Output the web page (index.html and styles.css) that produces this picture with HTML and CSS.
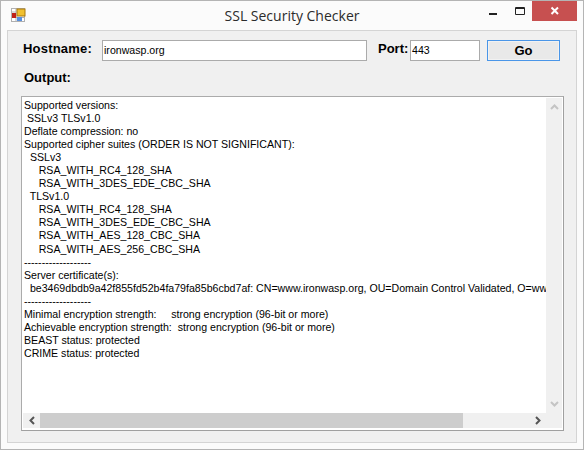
FILE: index.html
```html
<!DOCTYPE html>
<html lang="en">
<head>
    <meta charset="UTF-8">
    <meta name="viewport" content="width=device-width, initial-scale=1.0">
    <title>SSL Security Checker</title>
    <link rel="stylesheet" href="styles.css">
</head>
<body>

    <div class="window">
        <div class="titlebar">
            <svg class="app-icon" width="16" height="16" viewBox="0 0 16 16">
                <rect x="0.5" y="0.5" width="13" height="13" fill="#fff" stroke="#b0b0b0"/>
                <path d="M5 0v14M0 9.5h14M0 4h5" stroke="#b0b0b0" fill="none"/>
                <rect x="1" y="5" width="4" height="5" fill="#c02018"/>
                <rect x="6" y="1" width="8" height="7" fill="#f0c030" stroke="#a87810"/>
                <rect x="6" y="9" width="5" height="4" fill="#5890e0"/>
            </svg>
            <div class="title">SSL Security Checker</div>
            <div class="controls">
                <svg class="ctl" width="27" height="20" viewBox="0 0 27 20"><rect x="11" y="12" width="8" height="2" fill="#222"/></svg>
                <svg class="ctl" width="27" height="20" viewBox="0 0 27 20"><path d="M10.5 6.5h9v7h-9z M10.5 7.5h9" fill="none" stroke="#222"/></svg>
                <div class="close">
                    <svg width="10" height="10" viewBox="0 0 10 10"><path d="M1.5 1.5l6.5 6.5M8 1.5l-6.5 6.5" stroke="#fff" stroke-width="2"/></svg>
                </div>
            </div>
        </div>

        <div class="panel">
            <div class="form-row">
                <label class="label host-label">Hostname:</label>
                <div class="input host-input">ironwasp.org</div>
                <label class="label port-label">Port:</label>
                <div class="input port-input">443</div>
                <button class="go">Go</button>
            </div>
            <div class="label output-label">Output:</div>

            <div class="output">
                <pre class="text">Supported versions:
 SSLv3 TLSv1.0
Deflate compression: no
Supported cipher suites (ORDER IS NOT SIGNIFICANT):
  SSLv3
     RSA_WITH_RC4_128_SHA
     RSA_WITH_3DES_EDE_CBC_SHA
  TLSv1.0
     RSA_WITH_RC4_128_SHA
     RSA_WITH_3DES_EDE_CBC_SHA
     RSA_WITH_AES_128_CBC_SHA
     RSA_WITH_AES_256_CBC_SHA
-------------------
Server certificate(s):
  be3469dbdb9a42f855fd52b4fa79fa85b6cbd7af: CN=www.ironwasp.org, OU=Domain Control Validated, O=www.ironwasp.org
-------------------
Minimal encryption strength:     strong encryption (96-bit or more)
Achievable encryption strength:  strong encryption (96-bit or more)
BEAST status: protected
CRIME status: protected</pre>
                <div class="vscroll">
                    <svg width="9" height="6" viewBox="0 0 9 6"><path d="M1 5l3.5-3.5L8 5" fill="none" stroke="#c4c4c4" stroke-width="2"/></svg>
                    <svg width="9" height="6" viewBox="0 0 9 6"><path d="M1 1l3.5 3.5L8 1" fill="none" stroke="#c4c4c4" stroke-width="2"/></svg>
                </div>
                <div class="hscroll">
                    <svg class="arrow" width="6" height="9" viewBox="0 0 6 9"><path d="M5 1L1.5 4.5 5 8" fill="none" stroke="#555" stroke-width="2"/></svg>
                    <div class="track"><div class="thumb"></div></div>
                    <svg class="arrow" width="6" height="9" viewBox="0 0 6 9"><path d="M1 1l3.5 3.5L1 8" fill="none" stroke="#555" stroke-width="2"/></svg>
                </div>
                <div class="corner"></div>
            </div>
        </div>
    </div>

</body>
</html>
```
FILE: styles.css
```css
html, body {
    margin: 0;
    padding: 0;
    width: 584px;
    height: 450px;
    overflow: hidden;
}

body {
    font-family: 'Liberation Sans', Arial, sans-serif;
    color: #000;
}

.window {
    width: 584px;
    height: 450px;
    box-sizing: border-box;
    background-color: #fbfbfb;
    border: 1px solid #b4b4b4;
    display: flex;
    flex-direction: column;
}

.titlebar {
    height: 29px;
    flex: none;
    display: flex;
    align-items: flex-start;
    position: relative;
}

.app-icon {
    margin: 7px 0 0 10px;
}

.title {
    position: absolute;
    left: 0;
    right: 0;
    top: 5px;
    text-align: center;
    font-family: 'Open Sans', sans-serif;
    font-size: 14px;
    line-height: 20px;
    color: #2b2b2b;
}

.controls {
    margin-left: auto;
    margin-right: 6px;
    display: flex;
}

.ctl {
    display: block;
}

.close {
    width: 45px;
    height: 20px;
    background-color: #c75050;
    display: flex;
    align-items: center;
    justify-content: center;
}

.panel {
    flex: none;
    width: 570px;
    height: 413px;
    margin-left: 6px;
    box-sizing: border-box;
    background-color: #f0f0f0;
    border: 1px solid #d4d4d4;
    padding: 9px 12px 11px 13px;
    display: flex;
    flex-direction: column;
}

.form-row {
    display: flex;
    align-items: center;
    height: 21px;
}

.label {
    font-size: 13px;
    font-weight: bold;
    color: #000;
}

.host-label {
    margin-left: 2px;
    width: 79px;
    padding-bottom: 4px;
    letter-spacing: 0.2px;
}

.port-label {
    margin-left: 11px;
    width: 32px;
    padding-bottom: 4px;
}

.input {
    height: 21px;
    box-sizing: border-box;
    background-color: #fff;
    border: 1px solid #ababab;
    font-size: 10.6px;
    line-height: 19px;
    padding-left: 1px;
}

.host-input {
    width: 265px;
}

.port-input {
    width: 70px;
}

.go {
    width: 73px;
    height: 21px;
    margin-left: 7px;
    box-sizing: border-box;
    background-color: #e9e9e9;
    border: 1px solid #4a96e8;
    box-shadow: inset 0 0 0 1px #f2f2f2;
    font-family: inherit;
    font-size: 13px;
    font-weight: bold;
    color: #000;
    padding: 0;
}

.output-label {
    margin: 9px 0 0 3px;
    line-height: 15px;
    height: 26px;
}

.output {
    width: 543px;
    height: 335px;
    box-sizing: border-box;
    background-color: #fff;
    border: 1px solid #ababab;
    border-right-color: #a0a0a0;
    border-bottom-color: #a0a0a0;
    padding: 1px;
    display: grid;
    grid-template-columns: 523px 16px;
    grid-template-rows: 315px 15px;
}

.text {
    margin: 0;
    padding: 1px 0 0 1px;
    overflow: hidden;
    font-family: inherit;
    font-size: 10.6px;
    line-height: 13.05px;
    white-space: pre;
}

.vscroll {
    background-color: #f0f0f0;
    display: flex;
    flex-direction: column;
    justify-content: space-between;
    align-items: center;
    padding: 6px 0;
    box-sizing: border-box;
}

.hscroll {
    background-color: #f0f0f0;
    display: flex;
    align-items: center;
}

.arrow {
    flex: none;
    margin: 0 5.5px;
}

.track {
    flex: 1;
    height: 100%;
}

.thumb {
    width: 423px;
    height: 100%;
    background-color: #cdcdcd;
}

.corner {
    background-color: #f0f0f0;
}
```
